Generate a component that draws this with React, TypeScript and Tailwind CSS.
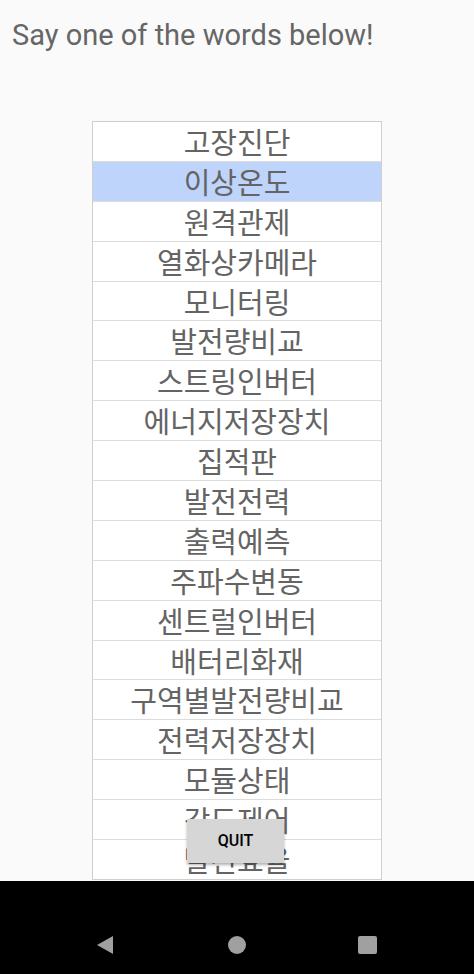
const words = [
  "고장진단",
  "이상온도",
  "원격관제",
  "열화상카메라",
  "모니터링",
  "발전량비교",
  "스트링인버터",
  "에너지저장장치",
  "집적판",
  "발전전력",
  "출력예측",
  "주파수변동",
  "센트럴인버터",
  "배터리화재",
  "구역별발전량비교",
  "전력저장장치",
  "모듈상태",
  "각도제어",
  "발전효율",
];

export default function App() {
  return (
    <div className="relative flex h-[974px] w-[474px] flex-col overflow-hidden bg-[#fafafa] font-['Roboto','Noto_Sans_CJK_KR',sans-serif]">
      <p className="px-3 pt-[17px] text-[29px] leading-[36px] text-[#666666]">
        Say one of the words below!
      </p>

      <div className="min-h-0 flex-1 overflow-hidden pt-[68px]">
        <ul className="ml-[92px] w-[290px] border border-[#cfcfcf] bg-white">
          {words.map((word, i) => (
            <li
              key={word}
              className={
                "flex h-[38.9px] items-center justify-center border-[#dcdcdc] text-[29px] leading-none text-[#646464] font-['Noto_Sans_CJK_KR',sans-serif] " +
                (i > 0 ? "box-content border-t " : "") +
                (i === 1 ? "bg-[#bfd4fb]" : "")
              }
            >
              {word}
            </li>
          ))}
        </ul>
      </div>

      <button className="absolute left-[187px] top-[819px] h-[44px] w-[97px] rounded-[2px] bg-[#d6d6d6] text-[16px] font-medium text-black shadow-[0_2px_3px_rgba(0,0,0,0.3)] font-['Roboto',sans-serif]">
        QUIT
      </button>

      <nav className="flex h-[93px] shrink-0 items-start bg-black pt-[55px]">
        <svg className="ml-[97px]" width="16" height="18" viewBox="0 0 16 18">
          <path d="M16 0 L0 9 L16 18 Z" fill="#a0a0a0" />
        </svg>
        <span className="ml-[115px] h-[18px] w-[18px] rounded-full bg-[#a0a0a0]" />
        <span className="ml-[112px] h-[18px] w-[19px] rounded-[2px] bg-[#a0a0a0]" />
      </nav>
    </div>
  );
}
